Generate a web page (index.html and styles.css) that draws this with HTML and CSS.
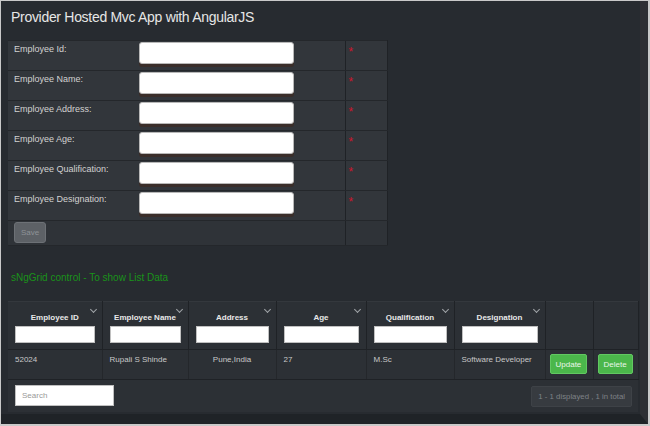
FILE: index.html
```html
<!DOCTYPE html>
<html lang="en">
<head>
    <meta charset="UTF-8">
    <meta name="viewport" content="width=device-width, initial-scale=1.0">
    <title>Provider Hosted Mvc App with AngularJS</title>
    <link rel="stylesheet" href="styles.css">
</head>
<body>
    <div class="page">
        <h1>Provider Hosted Mvc App with AngularJS</h1>

        <table class="emp-form">
            <colgroup>
                <col class="col-lbl">
                <col class="col-fld">
                <col class="col-req">
            </colgroup>
            <tr>
                <td class="lbl">Employee Id:</td>
                <td class="fld"><input type="text" /></td>
                <td class="req">*</td>
            </tr>
            <tr>
                <td class="lbl">Employee Name:</td>
                <td class="fld"><input type="text" /></td>
                <td class="req">*</td>
            </tr>
            <tr>
                <td class="lbl">Employee Address:</td>
                <td class="fld"><input type="text" /></td>
                <td class="req">*</td>
            </tr>
            <tr>
                <td class="lbl">Employee Age:</td>
                <td class="fld"><input type="text" /></td>
                <td class="req">*</td>
            </tr>
            <tr>
                <td class="lbl">Employee Qualification:</td>
                <td class="fld"><input type="text" /></td>
                <td class="req">*</td>
            </tr>
            <tr>
                <td class="lbl">Employee Designation:</td>
                <td class="fld"><input type="text" /></td>
                <td class="req">*</td>
            </tr>
            <tr class="save-row">
                <td colspan="2"><button class="btn-save">Save</button></td>
                <td></td>
            </tr>
        </table>

        <p class="grid-title">sNgGrid control - To show List Data</p>

        <div class="grid">
            <table class="grid-table">
                <colgroup>
                    <col style="width: 94px">
                    <col style="width: 86px">
                    <col style="width: 88px">
                    <col style="width: 90px">
                    <col style="width: 88px">
                    <col style="width: 91px">
                    <col style="width: 48px">
                    <col style="width: 45px">
                </colgroup>
                <thead>
                    <tr>
                        <th><span class="chev"></span><div class="hd">Employee ID</div><input type="text" /></th>
                        <th><span class="chev"></span><div class="hd">Employee Name</div><input type="text" /></th>
                        <th><span class="chev"></span><div class="hd">Address</div><input type="text" /></th>
                        <th><span class="chev"></span><div class="hd">Age</div><input type="text" /></th>
                        <th><span class="chev"></span><div class="hd">Qualification</div><input type="text" /></th>
                        <th><span class="chev"></span><div class="hd">Designation</div><input type="text" /></th>
                        <th></th>
                        <th></th>
                    </tr>
                </thead>
                <tbody>
                    <tr>
                        <td>52024</td>
                        <td>Rupali S Shinde</td>
                        <td class="center">Pune,India</td>
                        <td>27</td>
                        <td>M.Sc</td>
                        <td>Software Developer</td>
                        <td class="act"><button class="btn-green">Update</button></td>
                        <td class="act"><button class="btn-green">Delete</button></td>
                    </tr>
                </tbody>
            </table>
            <div class="grid-footer">
                <input type="text" class="search" placeholder="Search" />
                <span class="total">1 - 1 displayed , 1 in total</span>
            </div>
        </div>
    </div>
</body>
</html>
```

FILE: styles.css
```css
html, body {
    margin: 0;
    height: 100%;
}
body {
    background-color: #c9c9c9;
    font-family: "Liberation Sans", Arial, sans-serif;
    padding: 1px 2px 2px 1px;
    box-sizing: border-box;
}
.page {
    background-color: #272b30;
    height: 100%;
    box-sizing: border-box;
    padding: 7px 0 0 7px;
    border-right: 8px solid #2e2f34;
    border-bottom: 10px solid #1f2327;
    overflow: hidden;
}
h1 {
    color: #e6e6e6;
    font-weight: normal;
    font-size: 14px;
    line-height: 16px;
    letter-spacing: -0.3px;
    margin: 1px 0 15px 3px;
}
.emp-form {
    border-collapse: collapse;
    table-layout: fixed;
    width: 379px;
}
.col-lbl { width: 124px; }
.col-fld { width: 213px; }
.col-req { width: 42px; }
.emp-form tr {
    height: 30px;
}
.emp-form td {
    border-top: 1px solid #24272b;
    border-bottom: 1px solid #24272b;
    background-color: #32363b;
    padding: 0;
    vertical-align: top;
}
.emp-form td.req,
.emp-form .save-row td:last-child {
    border-left: 1px solid #1f2226;
    border-right: 1px solid #1f2226;
}
.emp-form .lbl {
    color: #d2d2d2;
    font-size: 9px;
    padding: 3px 0 0 6px;
}
.emp-form .fld {
    padding: 1px 0 0 7px;
}
.emp-form .fld input {
    width: 155px;
    height: 22px;
    border: 1px solid #b8b8b8;
    border-radius: 3px;
    box-sizing: border-box;
    box-shadow: 0 3px 0 #3a2e2a;
    background: #fff;
    display: block;
}
.emp-form .req {
    color: #d0142c;
    font-size: 12px;
    padding: 4px 0 0 3px;
}
.emp-form .save-row {
    height: 25px;
}
.emp-form .save-row td {
    background-color: #2f3338;
}
.btn-save {
    display: block;
    margin: 1px 0 0 6px;
    width: 32px;
    height: 21px;
    padding: 0;
    background-color: #5d6166;
    border: 1px solid #6d7176;
    border-radius: 3px;
    color: #8e9297;
    font-family: inherit;
    font-size: 8px;
}
.grid-title {
    color: #1a921a;
    font-size: 10px;
    line-height: 13px;
    margin: 25px 0 17px 3px;
}
.grid {
    width: 630px;
    background-color: #2c3035;
}
.grid-table {
    border-collapse: collapse;
    width: 630px;
    table-layout: fixed;
}
.grid-table thead tr {
    height: 48px;
}
.grid-table th {
    position: relative;
    padding: 0 7px;
    border-right: 1px solid #1f2226;
    border-bottom: 1px solid #1f2226;
    border-top: 1px solid #34383d;
    vertical-align: top;
    color: #e8e8e8;
    font-size: 8px;
}
.grid-table .hd {
    margin-top: 11px;
    height: 13px;
}
.grid-table th input {
    display: block;
    width: 100%;
    height: 17px;
    box-sizing: border-box;
    border: 1px solid #c0c0c0;
    background: #fff;
}
.chev {
    position: absolute;
    top: 5px;
    right: 6px;
    width: 4px;
    height: 4px;
    border-right: 1.5px solid #a0a4a8;
    border-bottom: 1.5px solid #a0a4a8;
    transform: rotate(45deg);
}
.grid-table tbody tr {
    height: 30px;
}
.grid-table td {
    padding: 5px 7px 0 7px;
    vertical-align: top;
    border-right: 1px solid #24272b;
    border-bottom: 1px solid #1f2226;
    color: #c8c8c8;
    font-size: 8px;
}
.grid-table td.center {
    text-align: center;
}
.grid-table td.act {
    padding: 4px 0 0 4px;
}
.btn-green {
    display: block;
    height: 20px;
    padding: 0 5px;
    background-color: #4bb74b;
    border: 1px solid #62c862;
    border-radius: 2px;
    color: #e8f6e8;
    font-family: inherit;
    font-size: 8px;
}
.grid-footer {
    display: flex;
    justify-content: space-between;
    align-items: flex-start;
    height: 32px;
    box-sizing: border-box;
    padding: 5px 6px 0 7px;
}
.search {
    width: 99px;
    height: 21px;
    box-sizing: border-box;
    border: 1px solid #c0c0c0;
    padding: 0 6px;
    font-family: inherit;
    font-size: 8px;
}
.search::placeholder {
    color: #999;
}
.total {
    margin-top: 1px;
    background-color: #373b40;
    border: 1px solid #3e4247;
    border-radius: 2px;
    color: #7e8287;
    font-size: 7.8px;
    padding: 5px 6px;
}
```
